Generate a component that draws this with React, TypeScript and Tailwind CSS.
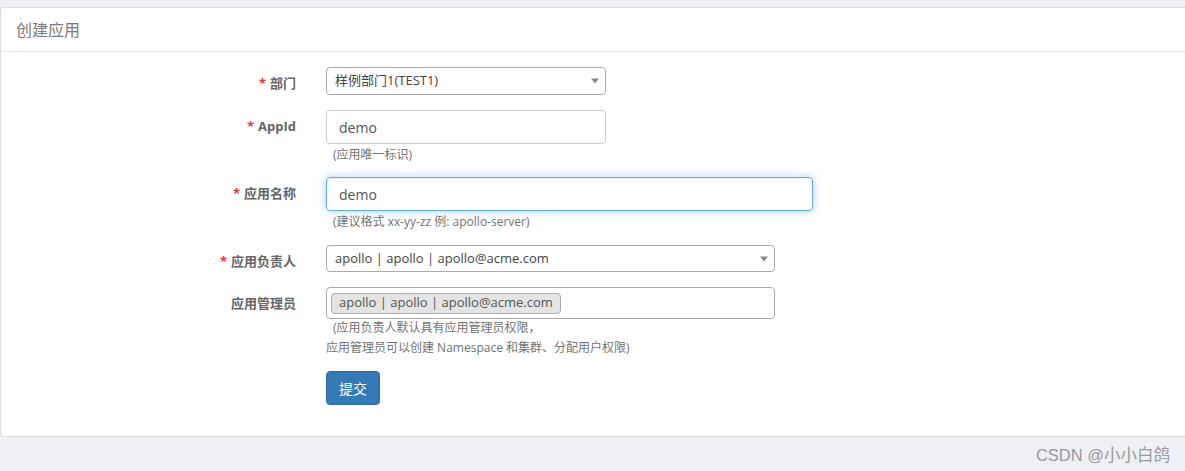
import React from "react";

const font = { fontFamily: '"Open Sans", "Noto Sans CJK SC", sans-serif' };

function Label({ text, required }: { text: string; required?: boolean }) {
  return (
    <div className="w-[295px] shrink-0 text-right pt-[7px] leading-[18px] text-[13px] font-bold text-[#666]">
      {required && <span className="text-[#e4393c] mr-[4px]">*</span>}
      {text}
    </div>
  );
}

function Arrow() {
  return (
    <span className="absolute right-[6px] top-1/2 -translate-y-1/2 w-0 h-0 border-l-[4px] border-r-[4px] border-t-[5px] border-l-transparent border-r-transparent border-t-[#888]" />
  );
}

export default function App() {
  return (
    <div
      className="w-[1185px] h-[471px] bg-[#eff0f5] overflow-hidden text-[#555]"
      style={font}
    >
      <div className="pt-[7px]">
        <div className="bg-white border border-r-0 border-[#dcdcdc] rounded-l-[4px] h-[430px]">
          <div className="h-[44px] border-b border-[#e8e8e8] px-[15px] flex items-center text-[16px] text-[#7a7a7a]">
            创建应用
          </div>
          <div className="pt-[15px]">
            {/* 部门 */}
            <div className="flex mb-[15px]">
              <Label text="部门" required />
              <div className="ml-[30px] relative w-[280px] h-[28px] border border-[#aaa] rounded-[4px] flex items-center pl-[8px] text-[13px] text-[#444]">
                样例部门1(TEST1)
                <Arrow />
              </div>
            </div>
            {/* AppId */}
            <div className="flex mb-[14px]">
              <Label text="AppId" required />
              <div className="ml-[30px]">
                <div className="w-[280px] h-[34px] border border-[#ccc] rounded-[4px] flex items-center pl-[12px] text-[14px] text-[#555]">
                  demo
                </div>
                <div className="mt-[2px] pl-[7px] leading-[17px] text-[12px] text-[#737373]">
                  (应用唯一标识)
                </div>
              </div>
            </div>
            {/* 应用名称 */}
            <div className="flex mb-[15px]">
              <Label text="应用名称" required />
              <div className="ml-[30px]">
                <div className="w-[487px] h-[34px] border border-[#66afe9] rounded-[4px] flex items-center pl-[12px] text-[14px] text-[#555] shadow-[inset_0_1px_1px_rgba(0,0,0,0.075),0_0_8px_rgba(102,175,233,0.6)]">
                  demo
                </div>
                <div className="mt-[2px] pl-[7px] leading-[17px] text-[12px] text-[#737373]">
                  (建议格式 xx-yy-zz 例: apollo-server)
                </div>
              </div>
            </div>
            {/* 应用负责人 */}
            <div className="flex mb-[15px]">
              <Label text="应用负责人" required />
              <div className="ml-[30px] relative w-[449px] h-[27px] border border-[#aaa] rounded-[4px] flex items-center pl-[8px] text-[13px] text-[#444]">
                apollo | apollo | apollo@acme.com
                <Arrow />
              </div>
            </div>
            {/* 应用管理员 */}
            <div className="flex mb-[13px]">
              <Label text="应用管理员" />
              <div className="ml-[30px]">
                <div className="w-[449px] h-[32px] border border-[#aaa] rounded-[4px] flex items-center pl-[4px]">
                  <span className="h-[21px] px-[7px] flex items-center bg-[#e4e4e4] border border-[#aaa] rounded-[4px] text-[13px] text-[#555]">
                    apollo | apollo | apollo@acme.com
                  </span>
                </div>
                <div className="mt-[-1px] leading-[20px] text-[12px] text-[#737373]">
                  <div className="pl-[7px]">(应用负责人默认具有应用管理员权限，</div>
                  <div>应用管理员可以创建 Namespace 和集群、分配用户权限)</div>
                </div>
              </div>
            </div>
            {/* 提交 */}
            <div className="flex">
              <div className="w-[295px] shrink-0" />
              <button className="ml-[30px] w-[54px] h-[34px] bg-[#337ab7] border border-[#2e6da4] rounded-[4px] text-white text-[14px]">
                提交
              </button>
            </div>
          </div>
        </div>
      </div>
      <div
        className="text-right pr-[15px] mt-[6px] text-[16.5px] text-[#999]"
        style={{ fontFamily: '"Liberation Sans", "Noto Sans CJK SC", sans-serif' }}
      >
        CSDN @小小白鸽
      </div>
    </div>
  );
}
